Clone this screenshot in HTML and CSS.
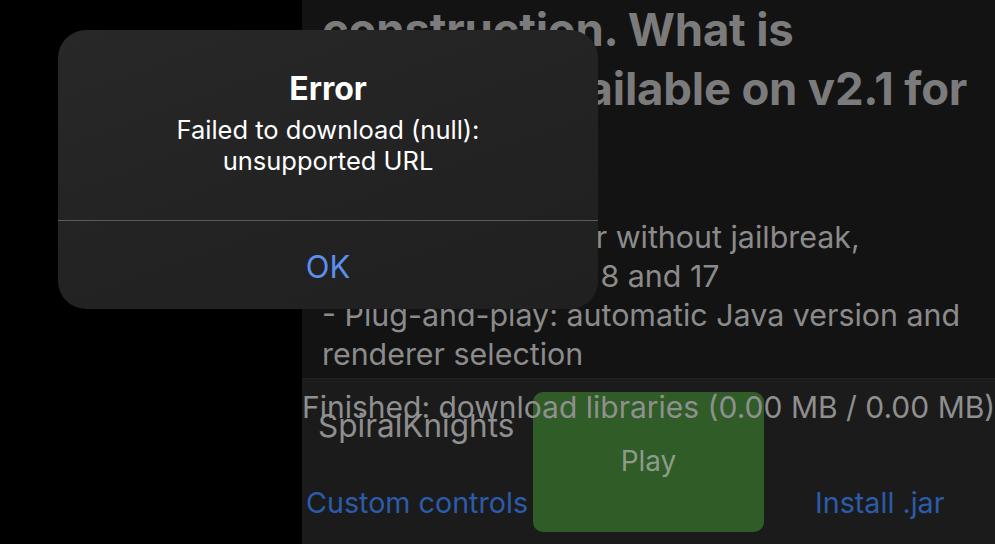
FILE: index.html
```html
<!DOCTYPE html>
<html>
<head>
<meta charset="utf-8">
<link rel="stylesheet" href="styles.css">
</head>
<body>
<div class="screen">
  <div class="side"></div>
  <main class="panel">
    <div class="news">
      <h1 class="headline">construction. What is<br>currently available on v2.1 for</h1>
      <p class="body">iOS:<br>- Features:<br>- iOS 14.0, or higher without jailbreak,<br>- Supports all Java 8 and 17<br>- Plug-and-play: automatic Java version and<br>renderer selection</p>
    </div>
    <footer class="bar">
      <div class="bar-left">
        <span class="profile">SpiralKnights</span>
        <a class="link">Custom controls</a>
      </div>
      <button class="play">Play</button>
      <div class="bar-right">
        <a class="link">Install .jar</a>
      </div>
      <div class="status">Finished: download libraries (0.00 MB / 0.00 MB)</div>
    </footer>
  </main>
  <div class="alert">
    <div class="alert-body">
      <div class="alert-title">Error</div>
      <div class="alert-msg">Failed to download (null):<br>unsupported URL</div>
    </div>
    <div class="alert-btn">OK</div>
  </div>
</div>
</body>
</html>
```
FILE: styles.css
```css
* { box-sizing: border-box; }
html, body { margin: 0; padding: 0; background: #000; }
body { font-family: Inter, Roboto, "Liberation Sans", sans-serif; }
.screen {
  position: relative;
  width: 995px;
  height: 544px;
  display: flex;
  overflow: hidden;
}
.side { width: 302px; flex: none; background: #000; }
.panel {
  flex: 1;
  display: flex;
  flex-direction: column;
  background: #131313;
}
.news {
  flex: 1;
  padding-left: 20px;
  overflow: hidden;
}
.headline {
  margin: 0;
  font-size: 45.5px;
  line-height: 59px;
  font-weight: 700;
  color: #7b7b7b;
  letter-spacing: -0.2px;
  white-space: nowrap;
}
.body {
  margin: 22px 0 0;
  font-size: 30.4px;
  line-height: 39px;
  color: #8b8b8b;
  white-space: nowrap;
}
.bar {
  position: relative;
  height: 166px;
  flex: none;
  background: #1b1b1b;
  border-top: 1px solid #222;
  display: flex;
  padding: 13px 0 12px;
}
.bar-left {
  width: 231px;
  display: flex;
  flex-direction: column;
  justify-content: space-between;
  padding-left: 4px;
}
.profile {
  font-size: 31.5px;
  color: #8f8f8f;
  padding-left: 12px;
  margin-top: 14px;
}
.link {
  font-size: 28.7px;
  color: #2c5bab;
  line-height: 34px;
  margin-bottom: 12px;
}
.play {
  width: 231px;
  height: 140px;
  border: none;
  border-radius: 10px;
  background: #2f5c27;
  color: #8d9b8a;
  font-family: inherit;
  font-size: 28px;
  padding: 0 0 2px;
}
.bar-right {
  flex: 1;
  display: flex;
  align-items: flex-end;
  padding-left: 51px;
}
.status {
  position: absolute;
  left: 0;
  top: 10px;
  font-size: 30px;
  color: #8f8f8f;
  white-space: nowrap;
}
.alert {
  position: absolute;
  left: 58px;
  top: 30px;
  width: 540px;
  height: 279px;
  border-radius: 28px;
  background: linear-gradient(160deg, #282828 0%, #232323 50%, #202020 100%);
  display: flex;
  flex-direction: column;
  color: #fff;
  text-align: center;
}
.alert-body {
  height: 191px;
  border-bottom: 1px solid #5a5a5a;
  padding-top: 40px;
}
.alert-title {
  font-size: 32px;
  font-weight: 700;
  line-height: 38px;
}
.alert-msg {
  margin-top: 6px;
  font-size: 25.5px;
  line-height: 31px;
}
.alert-btn {
  flex: 1;
  display: flex;
  align-items: center;
  justify-content: center;
  font-size: 31px;
  color: #5b8fee;
  padding-top: 2px;
}
```
